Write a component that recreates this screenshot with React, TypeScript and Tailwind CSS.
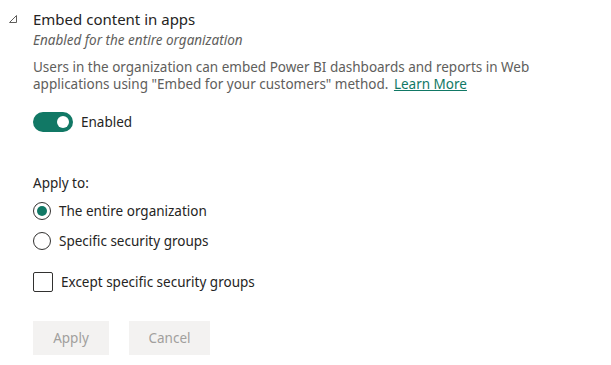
import React from "react";

export default function App() {
  return (
    <div
      className="w-[611px] h-[365px] bg-white text-[#252423] overflow-hidden"
      style={{ fontFamily: '"Noto Sans", "Open Sans", sans-serif' }}
    >
      <div className="flex pt-[8px]">
        <div className="w-[33px] flex justify-start pl-[9px] pt-[7px]">
          <svg width="9" height="8" viewBox="0 0 9 8">
            <path d="M7.5 0.5 L7.5 7.5 L0.5 7.5 Z" fill="none" stroke="#605e5c" strokeWidth="1" strokeLinejoin="round" />
          </svg>
        </div>
        <div className="flex flex-col">
          <div className="text-[15px] leading-[22px]">Embed content in apps</div>
          <div className="mt-[1px] text-[13.5px] leading-[18px] italic text-[#605e5c]">Enabled for the entire organization</div>
          <div className="mt-[10px] text-[13.5px] leading-[17px] text-[#605e5c] w-[560px]">
            Users in the organization can embed Power BI dashboards and reports in Web
            <br />
            applications using "Embed for your customers" method.{" "}
            <span className="text-[#117865] underline ml-[2px]">Learn More</span>
          </div>
          <div className="mt-[19px] flex items-center gap-[8px] h-[20px]">
            <div className="w-[40px] h-[20px] rounded-full bg-[#117865] flex items-center justify-end pr-[4px]">
              <div className="w-[12px] h-[12px] rounded-full bg-white" />
            </div>
            <span className="text-[13.5px] text-[#252423]">Enabled</span>
          </div>
          <div className="mt-[41px] text-[13.5px] leading-[20px]">Apply to:</div>
          <div className="mt-[8px] flex items-center gap-[8px] h-[20px]">
            <div className="w-[18px] h-[18px] rounded-full border border-[#323130] flex items-center justify-center">
              <div className="w-[10px] h-[10px] rounded-full bg-[#117865]" />
            </div>
            <span className="text-[13.5px]">The entire organization</span>
          </div>
          <div className="mt-[10px] flex items-center gap-[8px] h-[20px]">
            <div className="w-[18px] h-[18px] rounded-full border border-[#323130]" />
            <span className="text-[13.5px]">Specific security groups</span>
          </div>
          <div className="mt-[21px] flex items-center gap-[8px] h-[20px]">
            <div className="w-[20px] h-[20px] border border-[#323130] rounded-[2px]" />
            <span className="text-[13.5px]">Except specific security groups</span>
          </div>
          <div className="mt-[29px] flex gap-[20px]">
            <div className="w-[76px] h-[34px] bg-[#f3f2f1] text-[#a19f9d] text-[13.5px] flex items-center justify-center">Apply</div>
            <div className="w-[81px] h-[34px] bg-[#f3f2f1] text-[#a19f9d] text-[13.5px] flex items-center justify-center">Cancel</div>
          </div>
        </div>
      </div>
    </div>
  );
}
